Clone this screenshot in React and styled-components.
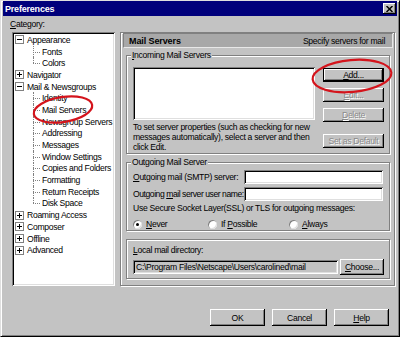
import styled, { createGlobalStyle, css } from "styled-components";

const GlobalStyle = createGlobalStyle`
  html, body {
    margin: 0;
    padding: 0;
    background: #c3c3c3;
  }
  body {
    font-family: "Liberation Sans", Arial, sans-serif;
  }
`;

const gray = '#c3c3c3';
const sunken = 'inset 1px 1px #808080, inset -1px -1px #fff, inset 2px 2px #000, inset -2px -2px #dfdfdf';

const Window = styled.div`
    position: relative;
    width: 400px;
    height: 337px;
    box-sizing: border-box;
    background: ${gray};
    border: 1px solid;
    border-color: #dfdfdf #000 #000 #dfdfdf;
    box-shadow: inset 1px 1px #fff, inset -1px -1px #808080;
    padding: 0 2px;
    font-size: 8.6px;
    letter-spacing: -0.3px;
    color: #000;
    display: flex;
    flex-direction: column;
    overflow: hidden;
`;

const TitleBar = styled.div`
    height: 15px;
    display: flex;
    align-items: center;
    justify-content: space-between;
    background: #00007b;
    color: #fff;
    font-weight: bold;
    font-size: 9px;
    letter-spacing: -0.2px;
    padding: 0 1px 0 2px;
`;

const CloseButton = styled.span`
    width: 13px;
    height: 11px;
    display: flex;
    align-items: center;
    justify-content: center;
    background: ${gray};
    box-shadow: inset -1px -1px #000, inset 1px 1px #fff, inset -2px -2px #808080;
`;

const Body = styled.div`
    display: grid;
    grid-template-columns: 103px 275px;
    grid-template-rows: 16px 254px;
    column-gap: 5px;
    margin-left: 9px;
`;

const Caption = styled.div`
    padding-top: 3px;
    margin-left: -2px;
    line-height: 11px;
`;

const TreeBox = styled.div`
    box-sizing: border-box;
    background: #fff;
    box-shadow: ${sunken};
    padding: 2px;
    overflow: hidden;
`;

const TreeRow = styled.div`
    position: relative;
    height: 11.7px;
    display: flex;
    align-items: center;
    gap: 3px;
    padding-left: ${p => (p.$child ? 28 : 1)}px;
    white-space: nowrap;

    ${p => p.$child && css`
        &::before {
            content: '';
            position: absolute;
            left: 19px;
            top: 50%;
            width: 7px;
            border-top: 1px dotted #808080;
        }
        &::after {
            content: '';
            position: absolute;
            left: 19px;
            top: 0;
            height: ${p.$last ? '50%' : '100%'};
            border-left: 1px dotted #808080;
        }
    `}
`;

const Panel = styled.div`
    box-sizing: border-box;
    display: flex;
    flex-direction: column;
    border: 1px solid #808080;
    box-shadow: inset 1px 1px #fff, 1px 1px #fff;
    padding: 0 4px 4px 5px;
`;

const PanelHeader = styled.div`
    height: 15px;
    box-sizing: border-box;
    margin: 0 -3px 0 -3px;
    display: flex;
    align-items: center;
    justify-content: space-between;
    padding: 0 7px 0 5px;
    background: #a8a8a8;
    border: 1px solid;
    border-color: #808080 #e8e8e8 #e8e8e8 #808080;
`;

const HeaderTitle = styled.span`
    font-weight: bold;
    font-size: 9px;
    letter-spacing: -0.1px;
`;

const Group = styled.fieldset`
    margin: ${p => p.$mt}px 0 0;
    padding: ${p => p.$pad};
    border: 1px solid #808080;
    box-shadow: inset 1px 1px #fff, 1px 1px #fff;
    min-width: 0;
`;

const Legend = styled.legend`
    padding: 0 1px;
    margin-left: -2px;
    line-height: 11px;
    background: ${gray};
`;

const IncomingBody = styled.div`
    display: grid;
    grid-template-columns: 182px 61px;
    justify-content: space-between;
`;

const ListBox = styled.div`
    height: 53px;
    background: #fff;
    box-shadow: ${sunken};
`;

const Hint = styled.div`
    margin-top: 2px;
    line-height: 10px;
    white-space: nowrap;
`;

const ButtonColumn = styled.div`
    display: flex;
    flex-direction: column;
    gap: 6px;
    padding-top: 1px;
`;

const Button = styled.button`
    box-sizing: border-box;
    width: ${p => p.$w || 61}px;
    height: ${p => p.$h || 14}px;
    margin-top: ${p => p.$mt || 0}px;
    padding: 0;
    background: ${gray};
    font: inherit;
    letter-spacing: inherit;
    line-height: 10px;
    color: ${p => (p.disabled ? '#8a8a8a' : '#000')};
    text-shadow: ${p => (p.disabled ? '1px 1px 0 #fff' : 'none')};
    border: ${p => (p.$default ? '1px solid #000' : 'none')};
    box-shadow: inset -1px -1px #000, inset 1px 1px #fff, inset -2px -2px #808080;
    white-space: nowrap;
`;

const FieldGrid = styled.div`
    display: grid;
    grid-template-columns: 111px 139px;
    grid-auto-rows: 14px;
    row-gap: 3px;
    align-items: center;
`;

const FieldLabel = styled.span`
    white-space: nowrap;
    letter-spacing: ${p => (p.$tight ? '-0.45px' : 'inherit')};
`;

const TextBox = styled.div`
    box-sizing: border-box;
    height: ${p => p.$h || 14}px;
    background: ${p => (p.$readOnly ? gray : '#fff')};
    box-shadow: ${sunken};
    padding-left: 3px;
    display: flex;
    align-items: center;
    white-space: nowrap;
    overflow: hidden;
`;

const Line = styled.div`
    margin-top: ${p => p.$mt || 0}px;
    line-height: 10px;
    white-space: nowrap;
`;

const RadioRow = styled.div`
    margin-top: 6px;
    height: 10px;
    display: grid;
    grid-template-columns: 75px 81px auto;
    align-items: center;
`;

const RadioOption = styled.label`
    display: flex;
    align-items: center;
    gap: 4px;
`;

const RadioMark = styled.span`
    width: 9px;
    height: 9px;
    border-radius: 50%;
    background: #fff;
    box-shadow: inset 1px 1px #808080, inset -1px -1px #dfdfdf;
    display: inline-flex;
    align-items: center;
    justify-content: center;

    &::after {
        content: '';
        width: 3px;
        height: 3px;
        border-radius: 50%;
        background: ${p => (p.$checked ? '#000' : 'transparent')};
    }
`;

const LocalRow = styled.div`
    margin-top: 4px;
    display: grid;
    grid-template-columns: 1fr 44px;
    column-gap: 2px;
    align-items: center;
`;

const Footer = styled.div`
    margin-top: 23px;
    display: flex;
    justify-content: flex-end;
    gap: 7px;
    padding-right: 8px;
`;

const Overlay = styled.svg`
    position: absolute;
    left: 0;
    top: 0;
    pointer-events: none;
`;

const Expander = ({ open }) => (
    <svg width="9" height="9" viewBox="0 0 9 9">
        <rect x="0.5" y="0.5" width="8" height="8" fill="#fff" stroke="#808080" />
        <path d="M2 4.5h5" stroke="#000" />
        {!open && <path d="M4.5 2v5" stroke="#000" />}
    </svg>
);

const tree = [
    { label: 'Appearance', exp: 'open' },
    { label: 'Fonts', child: true },
    { label: 'Colors', child: true, last: true },
    { label: 'Navigator', exp: 'closed' },
    { label: 'Mail & Newsgroups', exp: 'open' },
    { label: 'Identity', child: true },
    { label: 'Mail Servers', child: true },
    { label: 'Newsgroup Servers', child: true },
    { label: 'Addressing', child: true },
    { label: 'Messages', child: true },
    { label: 'Window Settings', child: true },
    { label: 'Copies and Folders', child: true },
    { label: 'Formatting', child: true },
    { label: 'Return Receipts', child: true },
    { label: 'Disk Space', child: true, last: true },
    { label: 'Roaming Access', exp: 'closed' },
    { label: 'Composer', exp: 'closed' },
    { label: 'Offline', exp: 'closed' },
    { label: 'Advanced', exp: 'closed' },
];

export default function App() {
    return (
        <Window>
            <GlobalStyle />
            <TitleBar>
                <span>Preferences</span>
                <CloseButton>
                    <svg width="7" height="6" viewBox="0 0 7 6">
                        <path d="M0.5 0l6 6M6.5 0l-6 6" stroke="#000" strokeWidth="1.5" />
                    </svg>
                </CloseButton>
            </TitleBar>

            <Body>
                <Caption><u>C</u>ategory:</Caption>
                <div />
                <TreeBox>
                    {tree.map((item) => (
                        <TreeRow key={item.label} $child={item.child} $last={item.last}>
                            {item.exp && <Expander open={item.exp === 'open'} />}
                            <span>{item.label}</span>
                        </TreeRow>
                    ))}
                </TreeBox>

                <Panel>
                    <PanelHeader>
                        <HeaderTitle>Mail Servers</HeaderTitle>
                        <span>Specify servers for mail</span>
                    </PanelHeader>

                    <Group $mt={2} $pad="6px 5px 1px 6px">
                        <Legend><u>I</u>ncoming Mail Servers</Legend>
                        <IncomingBody>
                            <div>
                                <ListBox />
                                <Hint>
                                    To set server properties (such as checking for new<br />
                                    messages automatically), select a server and then<br />
                                    click Edit.
                                </Hint>
                            </div>
                            <ButtonColumn>
                                <Button $default><u>A</u>dd...</Button>
                                <Button disabled><u>E</u>dit...</Button>
                                <Button disabled><u>D</u>elete</Button>
                                <Button disabled $mt={6}>Set as Default</Button>
                            </ButtonColumn>
                        </IncomingBody>
                    </Group>

                    <Group $mt={3} $pad="2px 5px 1px 6px">
                        <Legend>Outgoing Mail Server</Legend>
                        <FieldGrid>
                            <FieldLabel><u>O</u>utgoing mail (SMTP) server:</FieldLabel>
                            <TextBox />
                            <FieldLabel $tight>Outgoing <u>m</u>ail server user name:</FieldLabel>
                            <TextBox />
                        </FieldGrid>
                        <Line $mt={2}>Use Secure Socket Layer(SSL) or TLS for outgoing messages:</Line>
                        <RadioRow>
                            <RadioOption><RadioMark $checked /><span><u>N</u>ever</span></RadioOption>
                            <RadioOption><RadioMark /><span>If <u>P</u>ossible</span></RadioOption>
                            <RadioOption><RadioMark /><span><u>A</u>lways</span></RadioOption>
                        </RadioRow>
                    </Group>

                    <Group $mt={8} $pad="5px 5px 3px 6px">
                        <Line><u>L</u>ocal mail directory:</Line>
                        <LocalRow>
                            <TextBox $readOnly>C:\Program Files\Netscape\Users\carolined\mail</TextBox>
                            <Button $w={44} $h={16}><u>C</u>hoose...</Button>
                        </LocalRow>
                    </Group>
                </Panel>
            </Body>

            <Footer>
                <Button $w={55} $h={17}>OK</Button>
                <Button $w={55} $h={17}>Cancel</Button>
                <Button $w={55} $h={17}><u>H</u>elp</Button>
            </Footer>

            <Overlay width="400" height="337" viewBox="0 0 400 337">
                <ellipse cx="62" cy="108.5" rx="29.5" ry="12.5" fill="none" stroke="#d4141c" strokeWidth="2.2" transform="rotate(-9 62 108.5)" />
                <ellipse cx="351" cy="75" rx="39.5" ry="16" fill="none" stroke="#d4141c" strokeWidth="2.2" transform="rotate(-5 351 75)" />
            </Overlay>
        </Window>
    );
}
